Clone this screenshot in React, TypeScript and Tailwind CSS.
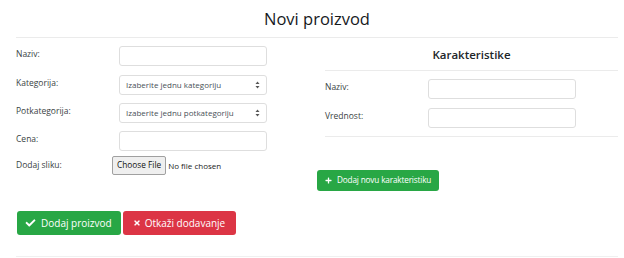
import { FaCheck, FaTimes, FaPlus } from 'react-icons/fa'

const font = { fontFamily: '"Open Sans", "Noto Sans", sans-serif' }

function SelectArrows() {
  return (
    <svg width="5" height="8" viewBox="0 0 5 8" className="shrink-0">
      <path d="M2.5 0.5 L4.5 3 L0.5 3 Z" fill="#555" />
      <path d="M2.5 7.5 L4.5 5 L0.5 5 Z" fill="#555" />
    </svg>
  )
}

function TextField() {
  return <div className="w-[148px] h-5 rounded-[3px] border border-[#dedede] bg-white" />
}

function SelectField({ text }: { text: string }) {
  return (
    <div className="w-[148px] h-5 rounded-[3px] border border-[#dedede] bg-white flex items-center justify-between pl-[6px] pr-[6px]">
      <span className="text-[8px] text-[#495057]">{text}</span>
      <SelectArrows />
    </div>
  )
}

function Row({ label, children, className }: { label: string; children: React.ReactNode; className?: string }) {
  return (
    <div className={'flex items-start ' + (className ?? '')}>
      <label className="w-[103px] shrink-0 text-[8.5px] leading-[14px] pt-[1px] text-[#3a3f44]">{label}</label>
      {children}
    </div>
  )
}

export default function App() {
  return (
    <div className="w-[624px] h-[258px] bg-white pl-4 pr-[6px] text-[#212529] overflow-hidden" style={font}>
      <div className="h-[37px] flex items-center justify-center">
        <h1 className="text-[16.5px] font-medium leading-none pt-[2px] text-[#16191c]">Novi proizvod</h1>
      </div>
      <div className="border-t border-[#ebebeb]" />

      <div className="flex">
        <div className="w-[301px] shrink-0">
          <Row label="Naziv:" className="mt-2">
            <TextField />
          </Row>
          <Row label="Kategorija:" className="mt-[9px]">
            <SelectField text="Izaberite jednu kategoriju" />
          </Row>
          <Row label="Potkategorija:" className="mt-[8px]">
            <SelectField text="Izaberite jednu potkategoriju" />
          </Row>
          <Row label="Cena:" className="mt-[8px]">
            <TextField />
          </Row>
          <div className="flex items-start mt-[5px]">
            <label className="w-[96px] shrink-0 text-[8.5px] leading-[14px] pt-[2px] text-[#3a3f44]">Dodaj sliku:</label>
            <div className="flex items-center">
              <button className="h-[19px] px-[4px] border border-[#a0a0a0] rounded-[2px] bg-[#efefef] text-[8.3px] text-[#111]">
                Choose File
              </button>
              <span className="ml-[2px] text-[8px] text-[#222]">No file chosen</span>
            </div>
          </div>

          <div className="flex gap-[2px] mt-[36px] ml-[1px]">
            <button className="h-6 flex items-center gap-[5px] pl-[8px] pr-[9px] rounded-[3px] bg-[#28a745] text-white text-[10px]">
              <FaCheck className="w-[11px] h-[10px]" />
              <span>Dodaj proizvod</span>
            </button>
            <button className="h-6 flex items-center gap-[4px] pl-[10px] pr-[11px] rounded-[3px] bg-[#dc3545] text-white text-[10px]">
              <FaTimes className="w-[8px] h-[8px]" />
              <span>Otkaži dodavanje</span>
            </button>
          </div>
        </div>

        <div className="flex-1">
          <div className="ml-2">
            <div className="h-[32px] flex items-center justify-center">
              <h2 className="text-[11.5px] font-semibold leading-none pt-[1px]">Karakteristike</h2>
            </div>
            <div className="border-t border-[#ebebeb]" />
            <Row label="Naziv:" className="mt-2">
              <TextField />
            </Row>
            <Row label="Vrednost:" className="mt-[9px]">
              <TextField />
            </Row>
            <div className="border-t border-[#ebebeb] mt-[8px]" />
          </div>
          <button className="mt-[33px] h-[21px] flex items-center gap-[5px] pl-[8px] pr-[8px] rounded-[3px] bg-[#28a745] text-white text-[8.2px] tracking-[-0.15px]">
            <FaPlus className="w-[7px] h-[7px]" />
            <span>Dodaj novu karakteristiku</span>
          </button>
        </div>
      </div>

      <div className="border-t border-[#f0f0f0] mt-[21px]" />
    </div>
  )
}
